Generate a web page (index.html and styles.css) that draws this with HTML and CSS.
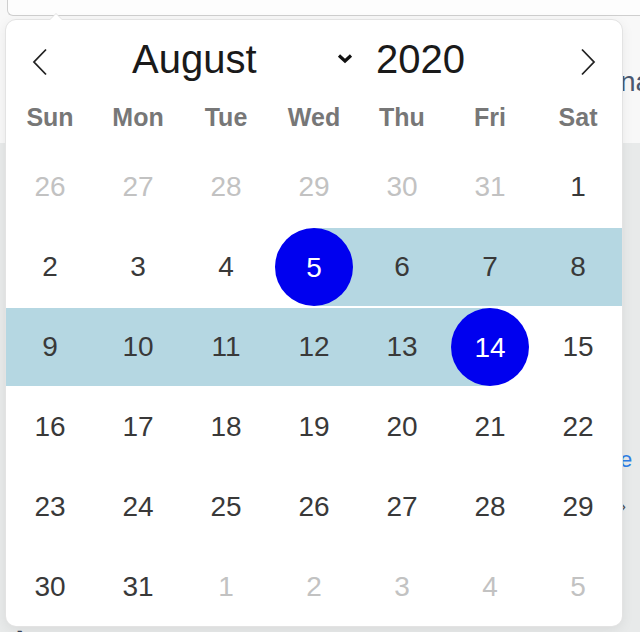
FILE: index.html
```html
<!DOCTYPE html>
<html lang="en">
<head>
  <meta charset="UTF-8" />
  <meta name="viewport" content="width=device-width, initial-scale=1.0" />
  <title>Date range</title>
  <link rel="stylesheet" href="styles.css">
</head>
<body>
  <div class="top">
    <div class="field"></div>
    <div class="intro"><span class="intro-text">name</span></div>
  </div>
  <div class="content">
    <div class="side">
      <span class="side-link">e</span>
      <span class="side-mark">&rsaquo;</span>
    </div>
    <div class="foot-mark">&#8599;</div>
  </div>

  <div class="calendar">
    <div class="cal-header">
      <span class="nav">
        <svg width="16" height="28" viewBox="0 0 16 28"><polyline points="14,1.5 2,14 14,26.5" /></svg>
      </span>
      <div class="month">
        <span class="month-name">August</span>
        <svg class="caret" width="16" height="11" viewBox="0 0 16 11"><polyline points="2,2.5 8,8 14,2.5" /></svg>
        <span class="year">2020</span>
      </div>
      <span class="nav nav-next">
        <svg width="16" height="28" viewBox="0 0 16 28"><polyline points="2,1.5 14,14 2,26.5" /></svg>
      </span>
    </div>

    <div class="weekdays">
      <span>Sun</span><span>Mon</span><span>Tue</span><span>Wed</span><span>Thu</span><span>Fri</span><span>Sat</span>
    </div>

    <div class="days">
      <span class="day other">26</span>
      <span class="day other">27</span>
      <span class="day other">28</span>
      <span class="day other">29</span>
      <span class="day other">30</span>
      <span class="day other">31</span>
      <span class="day">1</span>

      <span class="day">2</span>
      <span class="day">3</span>
      <span class="day">4</span>
      <span class="day range-start"><b>5</b></span>
      <span class="day in-range">6</span>
      <span class="day in-range">7</span>
      <span class="day in-range">8</span>

      <span class="day in-range">9</span>
      <span class="day in-range">10</span>
      <span class="day in-range">11</span>
      <span class="day in-range">12</span>
      <span class="day in-range">13</span>
      <span class="day range-end"><b>14</b></span>
      <span class="day">15</span>

      <span class="day">16</span>
      <span class="day">17</span>
      <span class="day">18</span>
      <span class="day">19</span>
      <span class="day">20</span>
      <span class="day">21</span>
      <span class="day">22</span>

      <span class="day">23</span>
      <span class="day">24</span>
      <span class="day">25</span>
      <span class="day">26</span>
      <span class="day">27</span>
      <span class="day">28</span>
      <span class="day">29</span>

      <span class="day">30</span>
      <span class="day">31</span>
      <span class="day other">1</span>
      <span class="day other">2</span>
      <span class="day other">3</span>
      <span class="day other">4</span>
      <span class="day other">5</span>
    </div>
  </div>
</body>
</html>
```

FILE: styles.css
```css
html, body {
  margin: 0;
  height: 100%;
  overflow: hidden;
}
body {
  font-family: 'Liberation Sans', Arial, sans-serif;
  background: #e8eaea;
  color: #393939;
  position: relative;
}

/* page behind the picker */
.top {
  height: 143px;
  background: #f8f8f8;
}
.field {
  height: 15px;
  margin-left: 7px;
  background: #fdfdfd;
  border: 1px solid #cfcfcf;
  border-top: none;
  border-right: none;
  border-radius: 0 0 0 6px;
}
.intro {
  padding-left: 620px;
  margin-top: 52px;
  white-space: nowrap;
  overflow: hidden;
}
.intro-text {
  font-size: 28px;
  line-height: 28px;
  color: #4b5870;
}
.content {
  height: 489px;
  position: relative;
}
.side {
  display: flex;
  flex-direction: column;
  gap: 22px;
  padding: 305px 0 0 620px;
  font-size: 22px;
  line-height: 24px;
}
.side-link {
  color: #2f7fe6;
}
.side-mark {
  color: #555;
  font-size: 18px;
}
.foot-mark {
  position: absolute;
  left: 12px;
  bottom: -10px;
  font-size: 14px;
  color: #3a4458;
}

/* picker popup */
.calendar {
  position: absolute;
  top: 20px;
  left: 6px;
  width: 616px;
  background: #fff;
  border-radius: 10px;
  box-shadow: 1px 0 0 #e3e3e3, -1px 0 0 #e3e3e3, 0 1px 0 #e3e3e3, 0 -1px 0 #e3e3e3, 0 3px 13px rgba(0,0,0,0.08);
}
.calendar::before,
.calendar::after {
  content: "";
  position: absolute;
  left: 44px;
  border: solid transparent;
  height: 0;
  width: 0;
}
.calendar::before {
  bottom: 100%;
  border-width: 7px;
  border-bottom-color: #e3e3e3;
  margin-left: -1px;
}
.calendar::after {
  bottom: 100%;
  border-width: 6px;
  border-bottom-color: #fff;
}

.cal-header {
  display: flex;
  align-items: center;
  height: 84px;
}
.nav {
  width: 68px;
  height: 84px;
  display: flex;
  align-items: center;
  justify-content: center;
}
.nav svg polyline {
  fill: none;
  stroke: #222;
  stroke-width: 1.8;
}
.nav-next {
  margin-left: auto;
}
.month {
  align-self: flex-start;
  display: flex;
  align-items: center;
  margin-left: 58px;
  padding-top: 15px;
  font-size: 40px;
  line-height: 48px;
  color: #1a1a1a;
}
.month-name {
  width: 205px;
}
.caret {
  margin-top: -2px;
}
.caret polyline {
  fill: none;
  stroke: #111;
  stroke-width: 3.2;
}
.year {
  margin-left: 23px;
}

.weekdays {
  display: grid;
  grid-template-columns: repeat(7, 88px);
  height: 26px;
  line-height: 26px;
  font-size: 25px;
  font-weight: bold;
  color: #777;
  text-align: center;
}

.days {
  display: grid;
  grid-template-columns: repeat(7, 88px);
  grid-auto-rows: 78px;
  row-gap: 2px;
  padding-top: 18px;
  font-size: 28px;
  text-align: center;
}
.day {
  display: flex;
  align-items: center;
  justify-content: center;
  line-height: 80px;
}
.day.other {
  color: #c2c2c2;
}
.day.in-range {
  background: #b5d7e2;
}
.range-start {
  background: linear-gradient(to right, transparent 50%, #b5d7e2 50%);
}
.range-end {
  background: linear-gradient(to right, #b5d7e2 50%, transparent 50%);
}
.range-start b,
.range-end b {
  font-weight: normal;
  width: 78px;
  height: 78px;
  line-height: 80px;
  border-radius: 50%;
  background: #0000ef;
  color: #fff;
}
.calendar .days .day:last-child {
  border-radius: 0 0 10px 0;
}
```
